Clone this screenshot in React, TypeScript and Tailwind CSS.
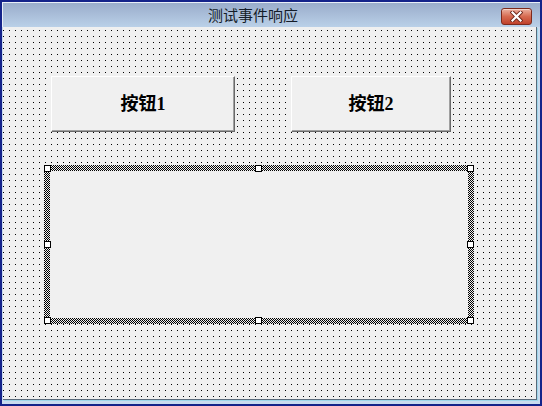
import React from "react";

const dotGrid =
  "bg-black [background-image:linear-gradient(90deg,transparent_1px,#f0f0f0_1px),linear-gradient(180deg,transparent_1px,#f0f0f0_1px)] [background-size:6px_6px] [background-position:0_3px]";

const hatch =
  "[background-image:repeating-conic-gradient(#000_0_25%,#f0f0f0_0_50%)] [background-size:2px_2px]";

function DesignButton({ label, width }: { label: string; width: string }) {
  return (
    <div
      className={`${width} h-[56px] flex items-center justify-center bg-[#f0f0f0] border border-t-white border-l-white border-r-[#696969] border-b-[#696969] shadow-[inset_-1px_-1px_0_#a0a0a0] text-[18px] font-bold text-black font-['Liberation_Serif','Noto_Sans_CJK_SC',serif]`}
    >
      {label}
    </div>
  );
}

function Handle({ pos }: { pos: string }) {
  return <div className={`absolute w-[7px] h-[7px] bg-white border border-black ${pos}`} />;
}

function CloseButton() {
  return (
    <div className="w-[31px] h-[17px] rounded-[3px] border border-[#7d2a1c] bg-gradient-to-b from-[#eab0a0] via-[#d66a50] to-[#c0402a] flex items-center justify-center shadow-[inset_0_1px_0_#f6d4c8]">
      <svg width="13" height="11" viewBox="0 0 13 11">
        <path d="M2.5 1.5 L10.5 9.5 M10.5 1.5 L2.5 9.5" stroke="#6b2418" strokeWidth="4" strokeLinecap="square" />
        <path d="M2.5 1.5 L10.5 9.5 M10.5 1.5 L2.5 9.5" stroke="#ffffff" strokeWidth="2.2" strokeLinecap="square" />
      </svg>
    </div>
  );
}

export default function App() {
  return (
    <div className="w-[542px] h-[406px] border-2 border-[#14238a] bg-[#c9dbee] flex flex-col overflow-hidden">
      {/* Title bar */}
      <div className="h-[25px] flex items-start border-t border-l border-t-[#e8eef8] border-l-[#e8eef8] bg-gradient-to-b from-[#9aadcb] to-[#bad0e8]">
        <div className="flex-1 h-full flex items-center justify-center text-[15px] text-[#141c28] font-['Noto_Sans_CJK_SC',sans-serif] leading-none pb-[2px] pl-[2px]">
          测试事件响应
        </div>
        <div className="pt-[5px] pr-[8px]">
          <CloseButton />
        </div>
      </div>

      {/* Client area */}
      <div className="flex-1 flex ml-[1px] mb-[4px] mr-[3px] border-r border-b border-r-[#5a6a7a] border-b-[#5a6a7a] shadow-[1px_1px_0_#9fd6ea]">
        <div className={`flex-1 ${dotGrid} flex flex-col`}>
          <div className="flex gap-[56px] mt-[49px] ml-[48px]">
            <DesignButton label="按钮1" width="w-[184px]" />
            <DesignButton label="按钮2" width="w-[160px]" />
          </div>

          <div className={`relative mt-[33px] ml-[41px] w-[430px] h-[159px] p-[6px] ${hatch}`}>
            <div className="w-full h-full bg-[#f0f0f0]" />
            <Handle pos="left-0 top-0" />
            <Handle pos="left-[211px] top-0" />
            <Handle pos="right-0 top-0" />
            <Handle pos="left-0 top-[76px]" />
            <Handle pos="right-0 top-[76px]" />
            <Handle pos="left-0 bottom-0" />
            <Handle pos="left-[211px] bottom-0" />
            <Handle pos="right-0 bottom-0" />
          </div>
        </div>
      </div>
    </div>
  );
}
